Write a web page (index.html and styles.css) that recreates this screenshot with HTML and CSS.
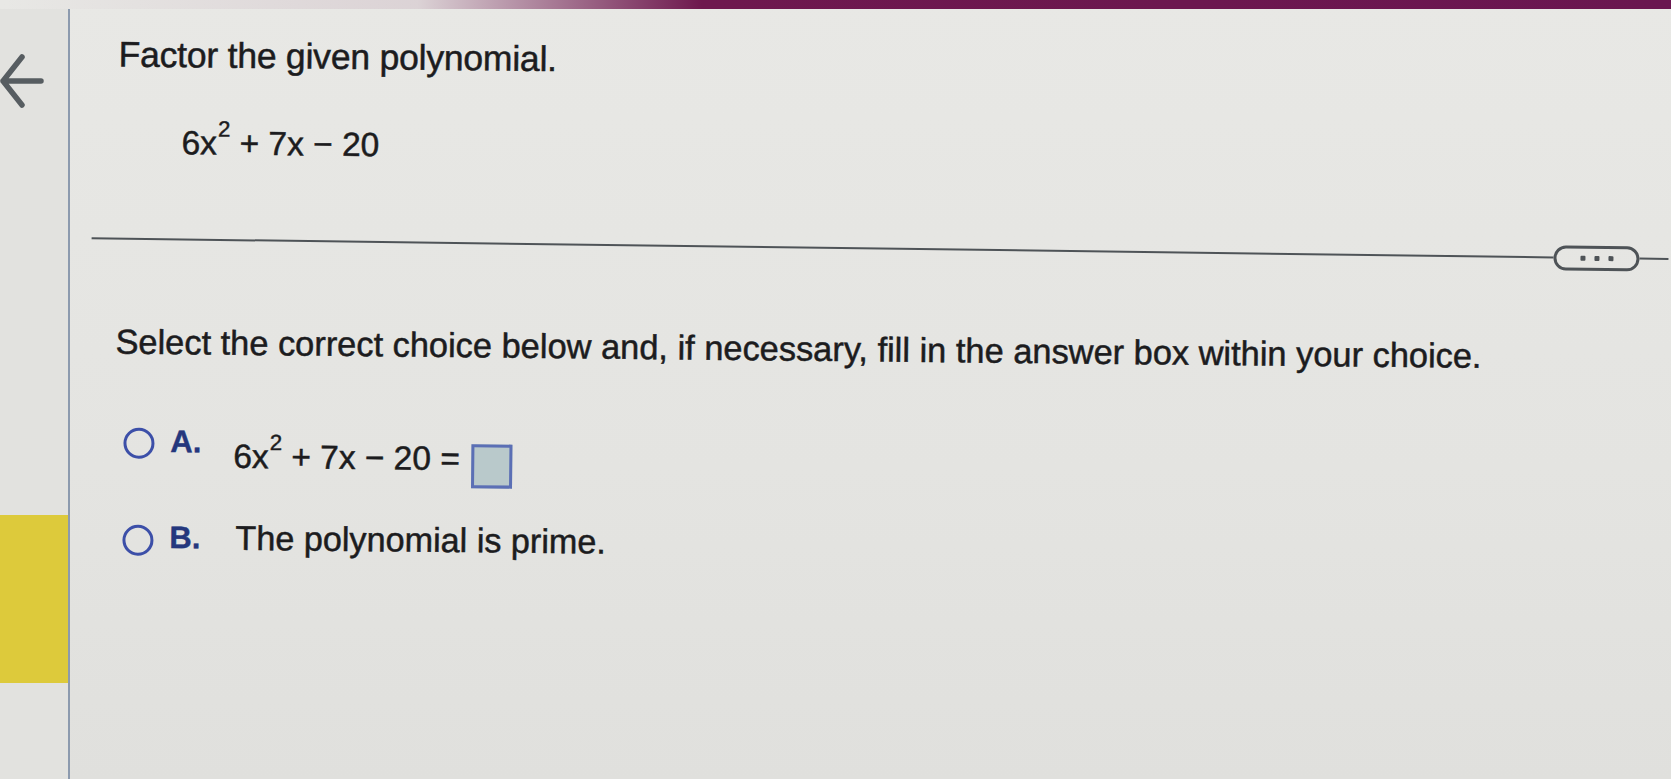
FILE: index.html
```html
<!DOCTYPE html>
<html lang="en">
<head>
<meta charset="utf-8">
<title>Factor the given polynomial</title>
<link rel="stylesheet" href="styles.css">
</head>
<body>
<div class="topbar"></div>
<div class="screen">
  <aside class="sidebar">
    <svg class="back" width="48" height="56" viewBox="0 0 48 56" aria-label="Back">
      <path d="M22 4 L3 28 L22 52 M3 28 H41" stroke="#575d61" stroke-width="5.5" fill="none" stroke-linecap="round" stroke-linejoin="round"/>
    </svg>
    <div class="flag"></div>
  </aside>
  <main class="content">
    <h1 class="title">Factor the given polynomial.</h1>
    <div class="expr">6x<sup>2</sup> + 7x − 20</div>
    <div class="divider">
      <span class="rule"></span>
      <span class="more"><i></i><i></i><i></i></span>
      <span class="rule tail"></span>
    </div>
    <p class="prompt">Select the correct choice below and, if necessary, fill in the answer box within your choice.</p>
    <ul class="choices">
      <li class="choice choice-a">
        <span class="radio"></span>
        <span class="letter">A.</span>
        <span class="math">6x<sup>2</sup> + 7x − 20 =</span>
        <span class="answer"></span>
      </li>
      <li class="choice choice-b">
        <span class="radio"></span>
        <span class="letter">B.</span>
        <span class="text">The polynomial is prime.</span>
      </li>
    </ul>
  </main>
</div>
</body>
</html>
```

FILE: styles.css
```css
* { box-sizing: border-box; }

html, body {
  margin: 0;
  padding: 0;
}

body {
  width: 1671px;
  height: 779px;
  overflow: hidden;
  background: linear-gradient(180deg, #e8e8e5 0%, #e4e4e1 60%, #e0e0dd 100%);
  font-family: "Liberation Sans", Arial, Helvetica, sans-serif;
  color: #1c1c1e;
  -webkit-text-stroke: 0.5px #1c1c1e;
  display: flex;
  flex-direction: column;
}

.topbar {
  height: 9px;
  flex: 0 0 9px;
  background: linear-gradient(90deg, rgba(110, 24, 78, 0) 0%, rgba(110, 24, 78, 0.1) 25%, #6e184e 42%, #6a1650 100%);
}

.screen {
  flex: 1;
  display: flex;
}

.sidebar {
  width: 70px;
  flex: 0 0 70px;
  border-right: 2px solid #8c9aae;
  background: #e2e2df;
  display: flex;
  flex-direction: column;
}

.back {
  display: block;
  margin-top: 44px;
}

.flag {
  margin-top: 406px;
  width: 68px;
  height: 168px;
  background: #ddca3b;
}

.content {
  flex: 1;
  padding-left: 24px;
  transform: rotate(0.6deg);
  transform-origin: 0 0;
}

.title {
  margin: 25px 0 0 25px;
  font-size: 35.5px;
  line-height: 40px;
  font-weight: normal;
  letter-spacing: -0.2px;
}

.expr {
  margin: 50px 0 0 89px;
  font-size: 33.5px;
  line-height: 36px;
}

sup {
  font-size: 0.66em;
  line-height: 0;
  vertical-align: 0.82em;
  margin-left: 1px;
}

.divider {
  margin-top: 66px;
  height: 24px;
  display: flex;
  align-items: center;
  transform: rotate(0.15deg);
  transform-origin: 0 50%;
}

.rule {
  flex: 1;
  height: 2px;
  background: #4e5357;
}

.rule.tail {
  flex: 0 0 29px;
}

.more {
  flex: 0 0 86px;
  height: 25px;
  border: 3px solid #4e5357;
  border-radius: 13px;
  display: flex;
  align-items: center;
  justify-content: center;
  gap: 9px;
}

.more i {
  width: 5px;
  height: 5px;
  border-radius: 1px;
  background: #4e5357;
}

.prompt {
  margin: 71px 0 0 25px;
  font-size: 34.4px;
  line-height: 40px;
}

.choices {
  list-style: none;
  margin: 58px 0 0 0;
  padding: 0 0 0 34px;
}

.choice {
  display: flex;
  align-items: flex-start;
}

.choice-a { height: 72px; }
.choice-b { margin-top: 23px; }

.radio {
  width: 31px;
  height: 31px;
  border: 3.5px solid #3c4fa8;
  border-radius: 50%;
  flex: 0 0 31px;
}

.choice-a .radio { margin-top: 8px; }
.choice-b .radio { margin-top: 10px; }

.letter {
  margin-left: 16px;
  width: 63px;
  flex: 0 0 63px;
  font-size: 31px;
  line-height: 34px;
  font-weight: bold;
  color: #24377d;
  -webkit-text-stroke: 0.4px #24377d;
}

.choice-a .letter { margin-top: 5px; }
.choice-b .letter { margin-top: 6px; width: 66px; flex-basis: 66px; }

.math {
  margin-top: 18px;
  font-size: 33.5px;
  line-height: 36px;
  white-space: nowrap;
}

.answer {
  margin-top: 21px;
  margin-left: 11px;
  width: 41px;
  height: 44px;
  border: 3px solid #5b6fb5;
  background: #b9c9cb;
}

.text {
  margin-top: 2px;
  font-size: 34.2px;
  line-height: 40px;
}
```
